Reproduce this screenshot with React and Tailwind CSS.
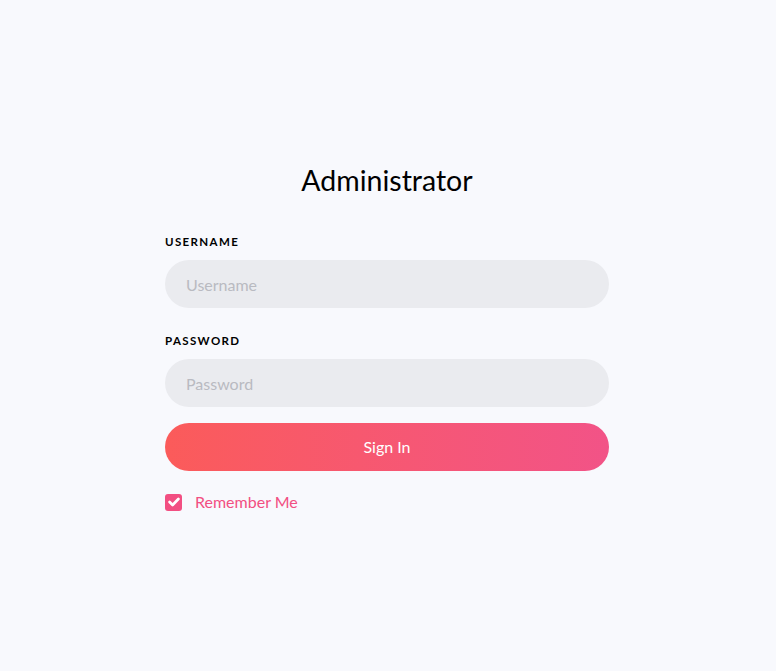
import React, { useState } from "react";

export default function App() {
  const [remember, setRemember] = useState(true);

  return (
    <div className="flex min-h-screen w-full justify-center bg-[#f8f9fd] pr-[2px] font-['Lato','Noto_Sans',sans-serif]">
      <form className="mt-[160px] flex w-[444px] flex-col" onSubmit={(e) => e.preventDefault()}>
        <h1 className="mb-[35px] text-center text-[28.5px] leading-[40px] text-black">Administrator</h1>

        <label className="mb-[11px] text-[11.5px] font-bold uppercase leading-[14px] tracking-[0.12em] text-black">Username</label>
        <input
          type="text"
          placeholder="Username"
          className="mb-[26px] h-[48px] w-full rounded-full bg-[#eaebef] px-[21px] text-[16px] text-black outline-none placeholder:text-[#b9bac1]"
        />

        <label className="mb-[11px] text-[11.5px] font-bold uppercase leading-[14px] tracking-[0.12em] text-black">Password</label>
        <input
          type="password"
          placeholder="Password"
          className="mb-[16px] h-[48px] w-full rounded-full bg-[#eaebef] px-[21px] text-[16px] text-black outline-none placeholder:text-[#b9bac1]"
        />

        <button
          type="submit"
          className="h-[48px] w-full rounded-full bg-gradient-to-r from-[#fb5b5a] to-[#f25387] text-[16px] text-white"
        >
          Sign In
        </button>

        <label className="mt-[19px] flex cursor-pointer items-center gap-[13px]">
          <span
            onClick={() => setRemember(!remember)}
            className={`flex h-[17px] w-[17px] items-center justify-center rounded-[3px] ${remember ? "bg-[#f24f82]" : "border border-gray-400 bg-white"}`}
          >
            {remember && (
              <svg width="12" height="10" viewBox="0 0 12 10" fill="none">
                <path d="M1.6 5L4.6 8L10.4 2" stroke="white" strokeWidth="2.7" strokeLinecap="round" strokeLinejoin="round" />
              </svg>
            )}
          </span>
          <span className="text-[16px] text-[#f24f82]">Remember Me</span>
        </label>
      </form>
    </div>
  );
}
